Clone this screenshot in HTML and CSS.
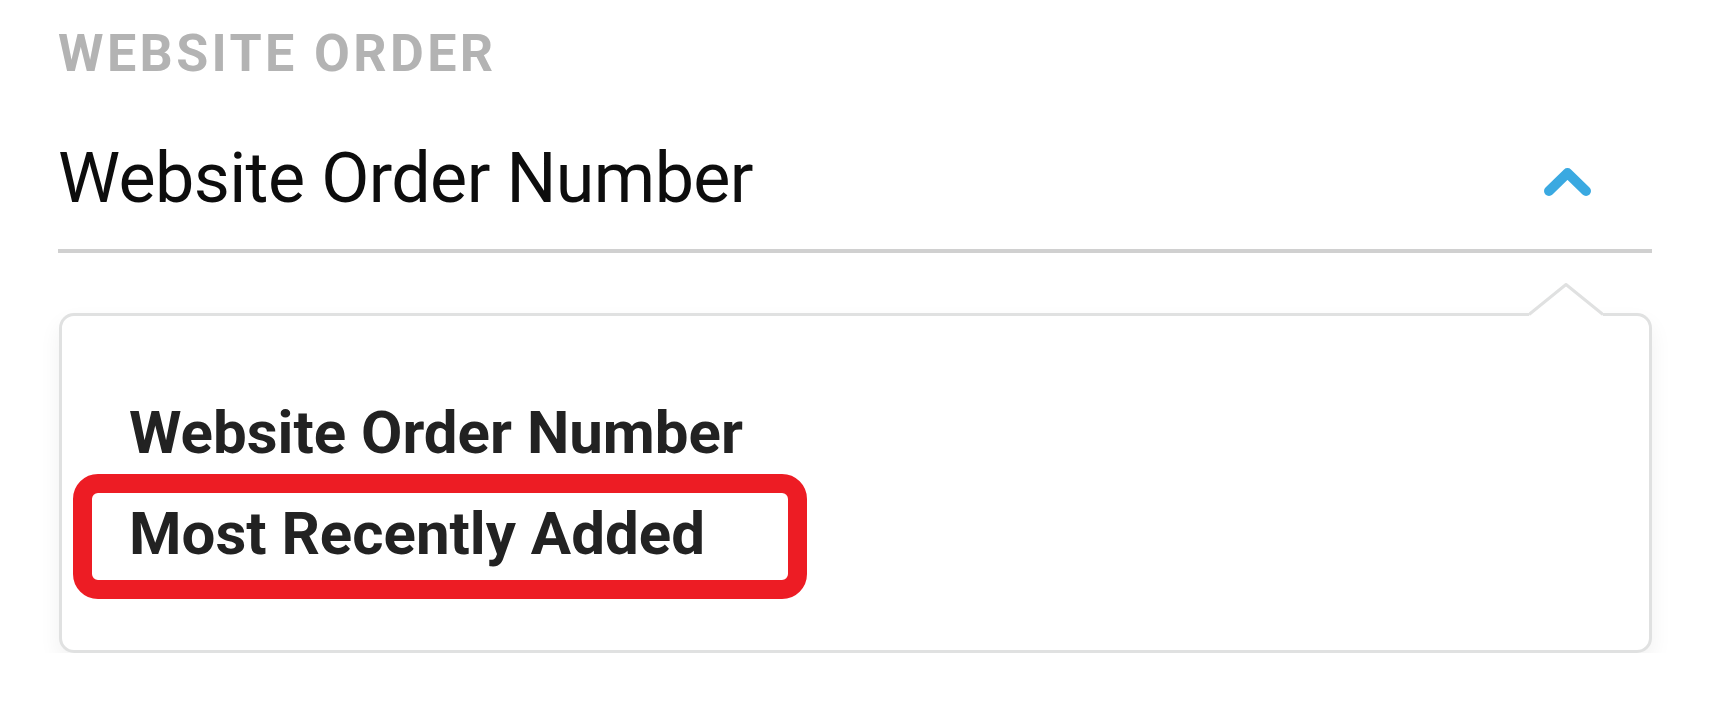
FILE: index.html
```html
<!DOCTYPE html>
<html lang="en">
<head>
<meta charset="utf-8">
<title>Website Order</title>
<link rel="stylesheet" href="styles.css">
</head>
<body>
<div class="field">
  <div class="field-label">WEBSITE ORDER</div>
  <div class="select">
    <span class="select-value">Website Order Number</span>
    <svg class="chevron" width="47" height="28" viewBox="0 0 47 28" aria-hidden="true">
      <polyline points="5,23 23.5,5 42,23" fill="none" stroke="#3aa9e1" stroke-width="10" stroke-linecap="round" stroke-linejoin="round"/>
    </svg>
  </div>
  <div class="menu">
    <svg class="notch" width="74" height="33" viewBox="0 0 74 33" aria-hidden="true">
      <polygon points="0,31.5 37,1.5 74,31.5 74,33 0,33" fill="#fff"/>
      <polyline points="0,31.5 37,1.5 74,31.5" fill="none" stroke="#e0e1e1" stroke-width="3" stroke-linejoin="round"/>
    </svg>
    <div class="menu-item">Website Order Number</div>
    <div class="menu-item">Most Recently Added<span class="highlight"></span></div>
  </div>
</div>
</body>
</html>
```

FILE: styles.css
```css
html, body {
  margin: 0;
  padding: 0;
  background: #ffffff;
}

body {
  font-family: Roboto, "Noto Sans", "Liberation Sans", sans-serif;
}

.field {
  padding: 28px 68px 0 58px;
}

.field-label {
  font-size: 52px;
  line-height: 1;
  font-weight: 700;
  letter-spacing: 3.4px;
  color: #b3b3b3;
  margin: 0 0 63px 0;
}

.select {
  display: flex;
  align-items: center;
  justify-content: space-between;
  padding-bottom: 36px;
  border-bottom: 4px solid #d0d0d0;
}

.select-value {
  font-size: 70px;
  line-height: 1;
  font-weight: 400;
  letter-spacing: -0.6px;
  color: #0d0d0d;
}

.chevron {
  display: block;
  margin: 8px 61px 0 0;
}

.menu {
  position: relative;
  margin: 60px 0 0 1px;
  padding: 66px 0 66px 0;
  border: 3px solid #e0e1e1;
  border-radius: 15px;
  background: #fff;
  box-shadow: 0 10px 22px rgba(0, 0, 0, 0.06);
}

.notch {
  position: absolute;
  top: -33px;
  right: 46px;
  display: block;
}

.menu-item {
  position: relative;
  padding-left: 67px;
  font-size: 60px;
  line-height: 101px;
  font-weight: 700;
  color: #222222;
}

.highlight {
  position: absolute;
  left: 11px;
  top: -9px;
  width: 734px;
  height: 125px;
  box-sizing: border-box;
  border: 19px solid #ed1c24;
  border-radius: 25px;
  pointer-events: none;
}
```
